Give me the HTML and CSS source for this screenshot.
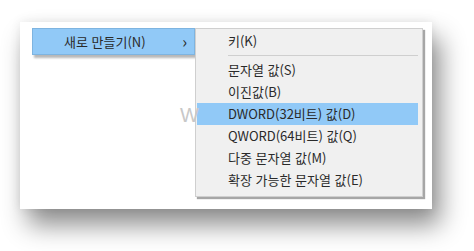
FILE: index.html
```html
<!DOCTYPE html>
<html lang="ko">
    <head>
        <meta charset="UTF-8" />
        <title>새로 만들기 메뉴</title>
        <link rel="stylesheet" href="styles.css">
    </head>
    <body>
        <div class="frame">
            <!-- Parent menu item -->
            <div class="menu-item">
                <span class="menu-label">새로 만들기(N)</span>
                <span class="menu-arrow">&rsaquo;</span>
            </div>

            <!-- Submenu -->
            <div class="submenu">
                <div class="submenu-row">키(K)</div>
                <div class="submenu-sep"></div>
                <div class="submenu-row">문자열 값(S)</div>
                <div class="submenu-row">이진값(B)</div>
                <div class="submenu-row active">DWORD(32비트) 값(D)</div>
                <div class="submenu-row">QWORD(64비트) 값(Q)</div>
                <div class="submenu-row">다중 문자열 값(M)</div>
                <div class="submenu-row">확장 가능한 문자열 값(E)</div>
            </div>

            <span class="watermark">W</span>
        </div>
    </body>
</html>
```

FILE: styles.css
```css
* {
    margin: 0;
    padding: 0;
    box-sizing: border-box;
}

body {
    min-height: 251px;
    background-color: #fff;
    font-family: "Noto Sans CJK KR", "Noto Sans", sans-serif;
    font-size: 13px;
    color: #2a2a2a;
}

/* White card holding the screenshot */
.frame {
    position: relative;
    margin: 22px 0 0 20px;
    width: 412px;
    height: 187px;
    padding: 6px 0 0 12px;
    background-color: #fff;
    box-shadow: 8px 16px 24px rgba(0, 0, 0, 0.45), 0 0 10px rgba(0, 0, 0, 0.08);
    display: flex;
    align-items: flex-start;
}

/* Parent item */
.menu-item {
    width: 163px;
    height: 27px;
    padding: 0 7px 0 31px;
    background-color: #91c9f7;
    border: 1px solid #7eb4e0;
    box-shadow: 2px 3px 2px rgba(0, 0, 0, 0.28);
    display: flex;
    align-items: center;
    justify-content: space-between;
}

.menu-arrow {
    font-size: 16px;
    line-height: 1;
    margin-top: -2px;
}

/* Submenu */
.submenu {
    width: 228px;
    height: 169px;
    padding: 1px 4px 4px 1px;
    background-color: #f0f0f0;
    border: 1px solid #cfcfcf;
    box-shadow: 2px 2px 1px rgba(0, 0, 0, 0.35);
}

.submenu-row {
    height: 22px;
    line-height: 22px;
    padding-left: 31px;
    white-space: nowrap;
}

.submenu-row.active {
    background-color: #91c9f7;
}

.submenu-sep {
    height: 1px;
    margin: 3px 0 3px 31px;
    background-color: #cfcfcf;
}

/* Faint site watermark */
.watermark {
    position: absolute;
    left: 160px;
    top: 82px;
    font-family: "Liberation Sans", sans-serif;
    font-size: 20px;
    color: #c8c8c8;
}
```
